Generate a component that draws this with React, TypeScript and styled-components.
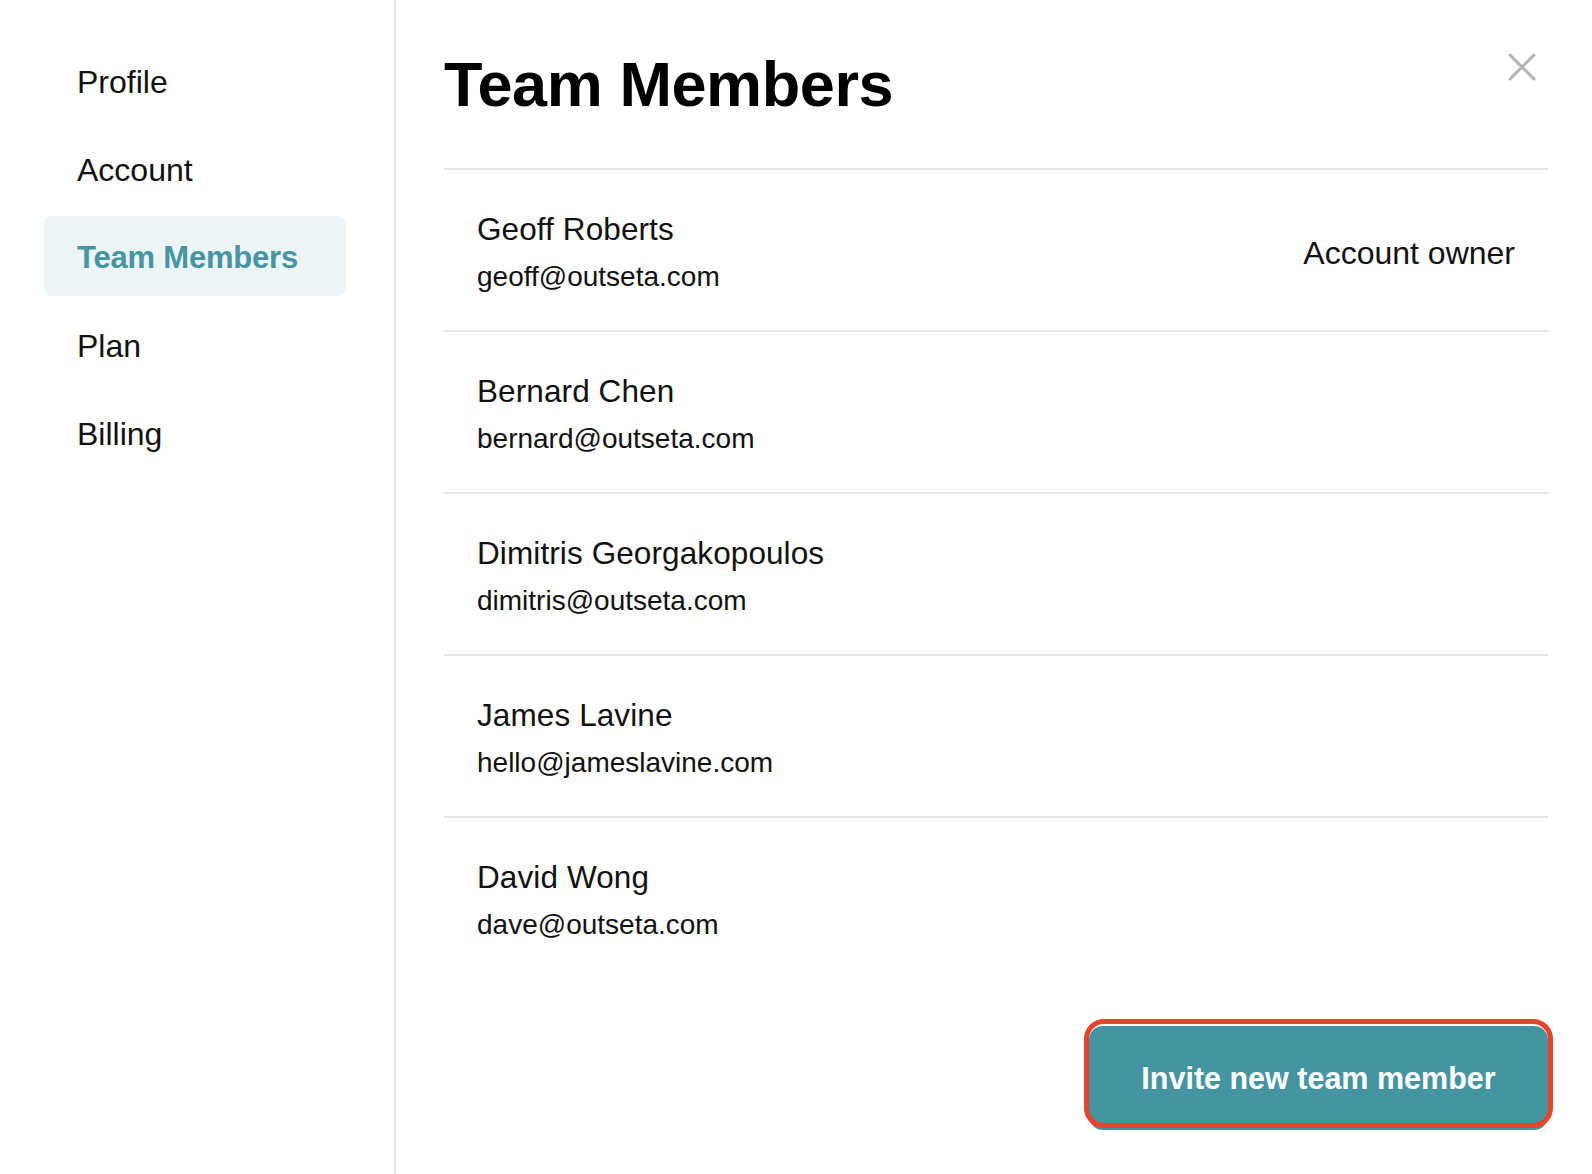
import React from "react";
import styled, { createGlobalStyle, css } from "styled-components";

const GlobalStyle = createGlobalStyle`
  html, body {
    margin: 0;
    padding: 0;
    background: #ffffff;
  }
  body {
    font-family: "Liberation Sans", Arial, "Helvetica Neue", sans-serif;
    color: #111111;
    -webkit-font-smoothing: antialiased;
  }
  * { box-sizing: border-box; }
`;

const Layout = styled.div`
  display: flex;
  min-height: 1174px;
`;

const Sidebar = styled.aside`
  width: 396px;
  flex-shrink: 0;
  border-right: 2px solid #e4e4e4;
  padding: 40px 0 0 44px;
`;

const Nav = styled.nav`
  display: flex;
  flex-direction: column;
  gap: 8px;
  width: 302px;
`;

const NavItem = styled.a<{ $active?: boolean }>`
  display: flex;
  align-items: center;
  height: 80px;
  padding: 4px 0 0 33px;
  border-radius: 8px;
  font-size: 32px;
  color: #111111;
  text-decoration: none;
  cursor: pointer;

  ${({ $active }) =>
    $active &&
    css`
      background: #ecf4f5;
      color: #4596a2;
      font-weight: 700;
      font-size: 31px;
      letter-spacing: -0.2px;
    `}
`;

const Main = styled.main`
  flex: 1;
  padding: 0 44px 0 48px;
  display: flex;
  flex-direction: column;
`;

const Header = styled.header`
  display: flex;
  justify-content: space-between;
  align-items: flex-start;
  padding: 53px 0 53px;
  border-bottom: 2px solid #e6e6e6;
`;

const Title = styled.h1`
  margin: 0;
  font-size: 63px;
  line-height: 62px;
  font-weight: 700;
  letter-spacing: -0.4px;
  color: #000000;
`;

const CloseButton = styled.button`
  width: 28px;
  height: 28px;
  padding: 0;
  margin-right: 12px;
  border: none;
  background: transparent;
  cursor: pointer;
  display: flex;
`;

const MemberList = styled.ul`
  list-style: none;
  margin: 0;
  padding: 0;
`;

const MemberRow = styled.li`
  display: flex;
  justify-content: space-between;
  align-items: center;
  padding: 39px 33px 33px;
  border-bottom: 2px solid #e6e6e6;

  &:last-child {
    border-bottom: none;
  }
`;

const MemberInfo = styled.div`
  display: flex;
  flex-direction: column;
  gap: 8px;
`;

const MemberName = styled.div`
  font-size: 31.5px;
  line-height: 40px;
  letter-spacing: 0.1px;
  color: #111111;
`;

const MemberEmail = styled.div`
  font-size: 28px;
  line-height: 40px;
  color: #111111;
`;

const Role = styled.div`
  font-size: 32px;
  line-height: 40px;
  color: #111111;
`;

const Footer = styled.div`
  display: flex;
  justify-content: flex-end;
  margin-top: 48px;
`;

const Highlight = styled.div`
  position: relative;

  &::after {
    content: "";
    position: absolute;
    top: -7px;
    left: -5px;
    right: -5px;
    bottom: 2px;
    border: 5px solid #e8432b;
    border-radius: 20px;
    pointer-events: none;
  }
`;

const PrimaryButton = styled.button`
  width: 459px;
  height: 104px;
  border: none;
  border-radius: 14px;
  background: #4495a2;
  color: #ffffff;
  font-family: inherit;
  font-size: 30.5px;
  font-weight: 700;
  letter-spacing: 0;
  cursor: pointer;
`;

const members = [
  { name: "Geoff Roberts", email: "geoff@outseta.com", role: "Account owner" },
  { name: "Bernard Chen", email: "bernard@outseta.com" },
  { name: "Dimitris Georgakopoulos", email: "dimitris@outseta.com" },
  { name: "James Lavine", email: "hello@jameslavine.com" },
  { name: "David Wong", email: "dave@outseta.com" },
];

const navItems = ["Profile", "Account", "Team Members", "Plan", "Billing"];

export default function App() {
  return (
    <>
      <GlobalStyle />
      <Layout>
        <Sidebar>
          <Nav>
            {navItems.map((item) => (
              <NavItem key={item} $active={item === "Team Members"}>
                {item}
              </NavItem>
            ))}
          </Nav>
        </Sidebar>
        <Main>
          <Header>
            <Title>Team Members</Title>
            <CloseButton aria-label="Close">
              <svg width="28" height="28" viewBox="0 0 28 28">
                <path
                  d="M2 2 L26 26 M26 2 L2 26"
                  stroke="#b3b3b3"
                  strokeWidth="3"
                  strokeLinecap="round"
                  fill="none"
                />
              </svg>
            </CloseButton>
          </Header>
          <MemberList>
            {members.map((m) => (
              <MemberRow key={m.email}>
                <MemberInfo>
                  <MemberName>{m.name}</MemberName>
                  <MemberEmail>{m.email}</MemberEmail>
                </MemberInfo>
                {m.role && <Role>{m.role}</Role>}
              </MemberRow>
            ))}
          </MemberList>
          <Footer>
            <Highlight>
              <PrimaryButton>Invite new team member</PrimaryButton>
            </Highlight>
          </Footer>
        </Main>
      </Layout>
    </>
  );
}
